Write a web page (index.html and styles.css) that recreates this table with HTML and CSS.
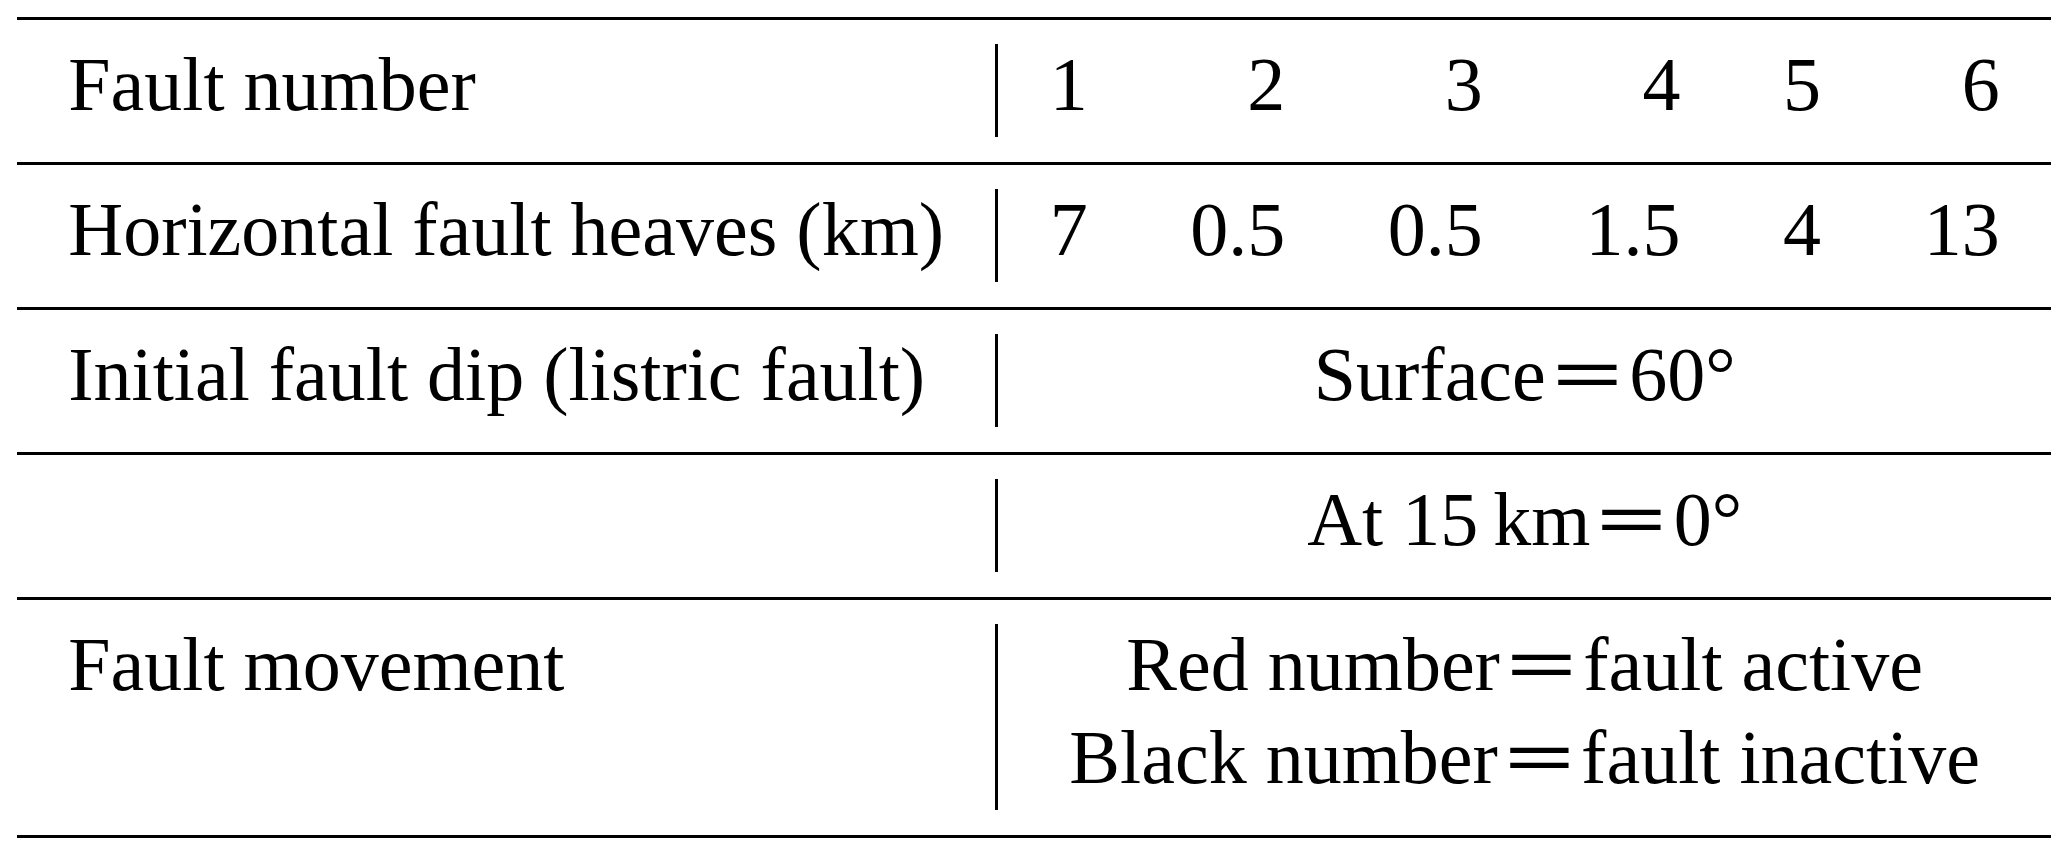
FILE: index.html
```html
<!DOCTYPE html>
<html lang="en">
<head>
<meta charset="utf-8">
<title>Fault parameters</title>
<link rel="stylesheet" href="styles.css">
</head>
<body>
<table class="faults">
  <tr>
    <td class="label">Fault number</td>
    <td class="sep"><span class="bar"></span></td>
    <td class="num">1</td>
    <td class="num">2</td>
    <td class="num">3</td>
    <td class="num">4</td>
    <td class="num">5</td>
    <td class="num">6</td>
  </tr>
  <tr>
    <td class="label">Horizontal fault heaves (km)</td>
    <td class="sep"><span class="bar"></span></td>
    <td class="num">7</td>
    <td class="num">0.5</td>
    <td class="num">0.5</td>
    <td class="num">1.5</td>
    <td class="num">4</td>
    <td class="num">13</td>
  </tr>
  <tr>
    <td class="label">Initial fault dip (listric fault)</td>
    <td class="sep"><span class="bar"></span></td>
    <td class="merged" colspan="6">Surface<span class="eq">=</span>60°</td>
  </tr>
  <tr>
    <td class="label"></td>
    <td class="sep"><span class="bar"></span></td>
    <td class="merged" colspan="6">At 15&thinsp;km<span class="eq">=</span>0°</td>
  </tr>
  <tr class="last">
    <td class="label">Fault movement</td>
    <td class="sep"><span class="bar tall"></span></td>
    <td class="merged" colspan="6">Red number<span class="eq">=</span>fault active<br>Black number<span class="eq">=</span>fault inactive</td>
  </tr>
</table>
</body>
</html>
```
FILE: styles.css
```css
html, body {
  margin: 0;
  padding: 0;
  background: #ffffff;
}

.faults {
  margin: 17px 0 0 17px;
  border-collapse: collapse;
  font-family: "Liberation Serif", "Times New Roman", serif;
  font-size: 76px;
  color: #000000;
}

.faults tr {
  border-top: 3px solid #000000;
}

.faults tr.last {
  border-bottom: 3px solid #000000;
}

.faults td {
  padding: 18px 51.3px 31px;
  line-height: 93px;
  vertical-align: top;
  white-space: nowrap;
}

.faults td.sep {
  padding: 24px 0 25px;
  width: 3px;
}

.bar {
  display: block;
  width: 3px;
  height: 93px;
  background: #000000;
}

.bar.tall {
  height: 186px;
}

.num {
  text-align: right;
}

.merged {
  text-align: center;
}

.eq {
  display: inline-block;
  margin: 0 20px;
  font-weight: bold;
  transform: scaleX(1.65);
}
```
